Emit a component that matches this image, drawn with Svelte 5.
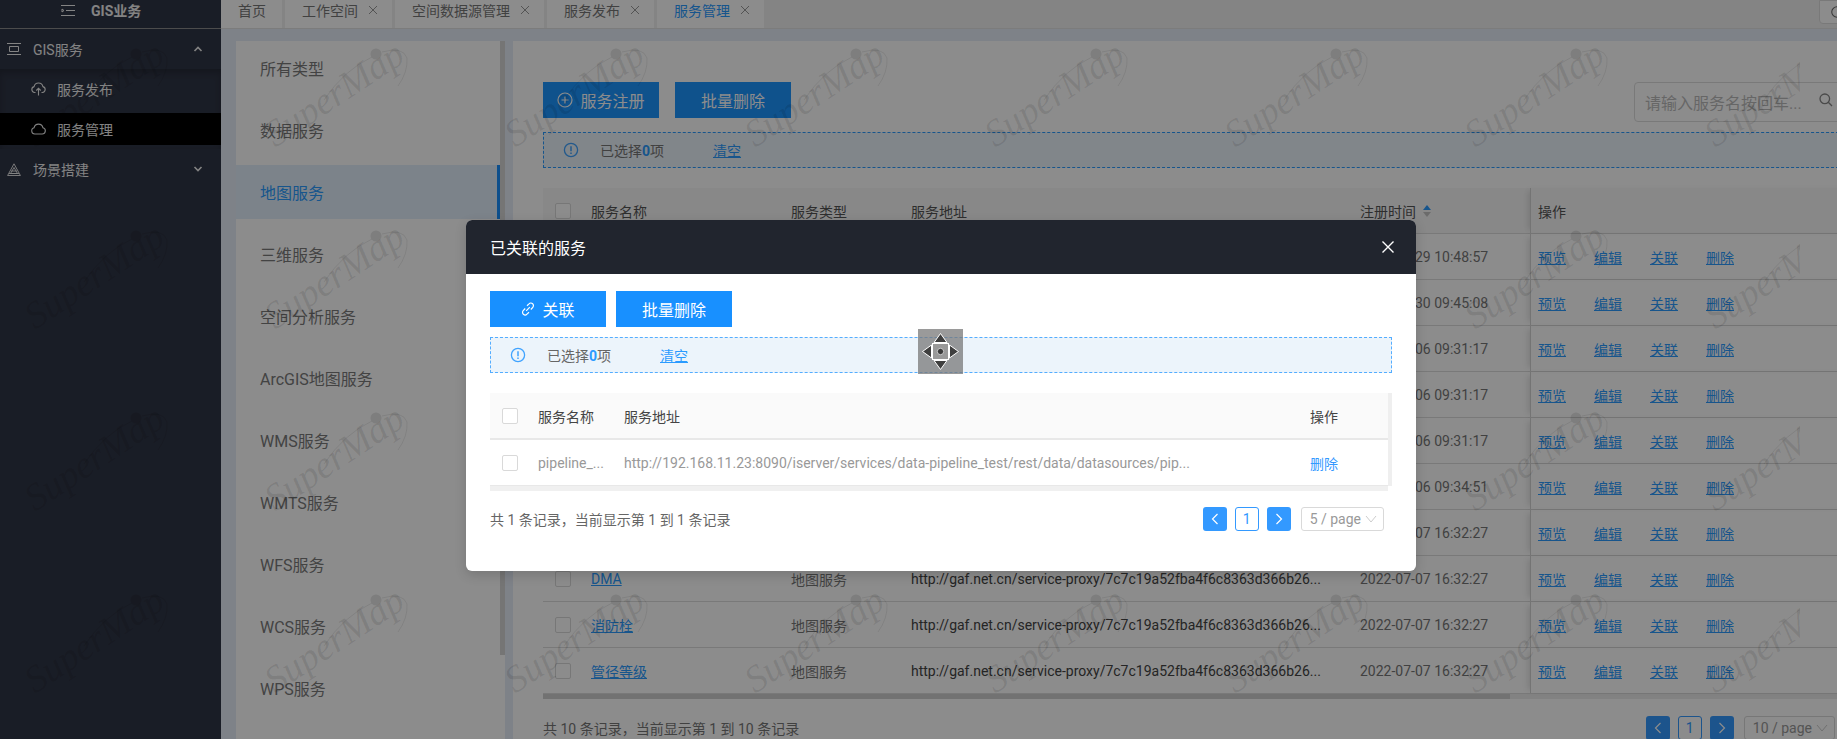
<script lang="ts">
  const tabs = [
    { label: '首页', close: false, active: false },
    { label: '工作空间', close: true, active: false },
    { label: '空间数据源管理', close: true, active: false },
    { label: '服务发布', close: true, active: false },
    { label: '服务管理', close: true, active: true },
  ];

  const types = [
    '所有类型', '数据服务', '地图服务', '三维服务', '空间分析服务', 'ArcGIS地图服务',
    'WMS服务', 'WMTS服务', 'WFS服务', 'WCS服务', 'WPS服务',
  ];

  const proxyUrl = 'http://gaf.net.cn/service-proxy/7c7c19a52fba4f6c8363d366b26...';

  // rows 1-7 sit behind the modal, only their time and actions show
  const rows = [
    { name: '', type: '', url: '', time: '2022-06-29 10:48:57' },
    { name: '', type: '', url: '', time: '2022-06-30 09:45:08' },
    { name: '', type: '', url: '', time: '2022-07-06 09:31:17' },
    { name: '', type: '', url: '', time: '2022-07-06 09:31:17' },
    { name: '', type: '', url: '', time: '2022-07-06 09:31:17' },
    { name: '', type: '', url: '', time: '2022-07-06 09:34:51' },
    { name: '', type: '', url: '', time: '2022-07-07 16:32:27' },
    { name: 'DMA', type: '地图服务', url: proxyUrl, time: '2022-07-07 16:32:27' },
    { name: '消防栓', type: '地图服务', url: proxyUrl, time: '2022-07-07 16:32:27' },
    { name: '管径等级', type: '地图服务', url: proxyUrl, time: '2022-07-07 16:32:27' },
  ];

  const actions = ['预览', '编辑', '关联', '删除'];
  const marks = Array.from({ length: 40 }, (_, i) => i);
</script>

{#snippet infoIcon()}
  <svg class="info-icon" width="16" height="16" viewBox="0 0 16 16" fill="none" stroke="currentColor">
    <circle cx="8" cy="8" r="6.6" stroke-width="1.3" />
    <path d="M8 4.3v4.9M8 10.6v1.3" stroke-width="1.5" />
  </svg>
{/snippet}

{#snippet pager(size)}
  <div class="pager">
    <button class="page-btn">
      <svg width="10" height="12" viewBox="0 0 10 12" fill="none" stroke="currentColor" stroke-width="1.2"><path d="M7.5 1 2.5 6l5 5" /></svg>
    </button>
    <button class="page-num">1</button>
    <button class="page-btn">
      <svg width="10" height="12" viewBox="0 0 10 12" fill="none" stroke="currentColor" stroke-width="1.2"><path d="M2.5 1l5 5-5 5" /></svg>
    </button>
    <div class="page-size">
      <span>{size} / page</span>
      <svg width="12" height="8" viewBox="0 0 12 8" fill="none" stroke="currentColor"><path d="M1 1l5 6 5-6" /></svg>
    </div>
  </div>
{/snippet}

<div class="app">
  <aside class="sidebar">
    <div class="brand">
      <svg width="14" height="11" viewBox="0 0 14 11" fill="none" stroke="currentColor">
        <path d="M0 .5h14M5 5.5h9M0 10.5h14M1 4v3l2-1.5z" />
      </svg>
      <span>GIS业务</span>
    </div>

    <div class="menu-row">
      <svg width="14" height="12" viewBox="0 0 14 12" fill="none" stroke="currentColor">
        <path d="M0 .5h14M0 11.5h14M2.5 3.5h9v5h-9z" />
      </svg>
      <span>GIS服务</span>
      <svg class="caret" width="10" height="6" viewBox="0 0 10 6" fill="none" stroke="currentColor" stroke-width="1.6"><path d="M1.5 5 5 1.5 8.5 5" /></svg>
    </div>
    <div class="submenu">
      <div class="sub-item">
        <svg width="15" height="14" viewBox="0 0 15 14" fill="none" stroke="currentColor" stroke-width="1.1">
          <path d="M4.5 10.5H3.6a3 3 0 0 1-.5-5.9 4.5 4.5 0 0 1 8.8 0 3 3 0 0 1-.5 5.9h-.9M7.5 13.500V6.500M5.300 8.500l2.200-2.200 2.200 2.200" />
        </svg>
        <span>服务发布</span>
      </div>
      <div class="sub-item selected">
        <svg width="15" height="12" viewBox="0 0 15 12" fill="none" stroke="currentColor" stroke-width="1.1">
          <path d="M3.800 11h7.400a3.200 3.200 0 0 0 .7-6.300 4.500 4.500 0 0 0-8.800 0A3.200 3.200 0 0 0 3.800 11z" />
        </svg>
        <span>服务管理</span>
      </div>
    </div>
    <div class="menu-row">
      <svg width="14" height="13" viewBox="0 0 14 13" fill="none" stroke="currentColor" stroke-width=".9">
        <path d="M7 .8 13.400 12.500H.6zM7 4.500 10.500 10.500H3.500zM2 10.500h10M4.200 8h5.600" />
      </svg>
      <span>场景搭建</span>
      <svg class="caret" width="10" height="6" viewBox="0 0 10 6" fill="none" stroke="currentColor" stroke-width="1.6"><path d="M1.500 1 5 4.500 8.500 1" /></svg>
    </div>
  </aside>

  <main class="main">
    <div class="tabs">
      {#each tabs as tab (tab.label)}
        <div class="tab" class:plain={!tab.close} class:active={tab.active}>
          <span>{tab.label}</span>
          {#if tab.close}
            <svg width="10" height="10" viewBox="0 0 10 10" fill="none" stroke="currentColor"><path d="M1 1l8 8M9 1l-8 8" /></svg>
          {/if}
        </div>
      {/each}
      <div class="tab-tool">
        <svg width="16" height="16" viewBox="0 0 16 16" fill="none" stroke="currentColor" stroke-width="1.2"><circle cx="8" cy="8" r="6" /></svg>
      </div>
    </div>

    <div class="workspace">
      <nav class="types">
        <div class="type-list">
          {#each types as type (type)}
            <div class="type-item" class:active={type === '地图服务'}>{type}</div>
          {/each}
        </div>
        <div class="type-scroll"></div>
      </nav>

      <section class="content">
        <div class="toolbar">
          <button class="btn">
            <svg width="16" height="16" viewBox="0 0 16 16" fill="none" stroke="currentColor" stroke-width="1.2">
              <circle cx="8" cy="8" r="7" /><path d="M8 4.500v7M4.500 8h7" />
            </svg>
            服务注册
          </button>
          <button class="btn">批量删除</button>
          <div class="search">
            <span>请输入服务名按回车...</span>
            <svg width="14" height="14" viewBox="0 0 14 14" fill="none" stroke="currentColor" stroke-width="1.3">
              <circle cx="5.800" cy="5.800" r="4.800" /><path d="M9.300 9.300 13 13" />
            </svg>
          </div>
        </div>

        <div class="selection">
          {@render infoIcon()}
          <span class="picked">已选择<b>0</b>项</span>
          <a class="clear" href="#clear">清空</a>
        </div>

        <div class="grid-head main-cols">
          <span class="cell-check"><i class="check"></i></span>
          <span>服务名称</span>
          <span>服务类型</span>
          <span>服务地址</span>
          <span class="time-head">
            注册时间
            <svg width="8" height="16" viewBox="0 0 8 16"><path d="M4 2 8 7H0z" fill="#2a9bff" /><path d="M4 14 8 9H0z" fill="#c4c4c4" /></svg>
          </span>
          <span class="ops">操作</span>
        </div>
        {#each rows as row, i (i)}
          <div class="grid-row main-cols">
            <span class="cell-check"><i class="check"></i></span>
            <span><a class="link" href="#name">{row.name}</a></span>
            <span class="muted">{row.type}</span>
            <span class="url">{row.url}</span>
            <span class="muted">{row.time}</span>
            <span class="ops links">
              {#each actions as action (action)}
                <a class="link" href="#action">{action}</a>
              {/each}
            </span>
          </div>
        {/each}
        <div class="hscroll"><div class="hscroll-thumb"></div></div>

        <div class="list-foot">
          <span>共 10 条记录，当前显示第 1 到 10 条记录</span>
          {@render pager(10)}
        </div>
      </section>
    </div>
  </main>

  <div class="watermark">
    {#each marks as mark (mark)}
      <svg class="mark" width="240" height="182" viewBox="0 0 240 182">
        <circle cx="136" cy="54" r="5.500" fill="rgba(0,0,0,0.1)" />
        <path d="M84 100Q104 70 132 57M142 52Q163 46 167 58Q168 72 158 86" fill="none" stroke="rgba(0,0,0,0.08)" />
        <text x="35" y="148" transform="rotate(-33.500 35 148)">SuperMap</text>
      </svg>
    {/each}
  </div>

  <div class="mask"></div>

  <div class="modal">
    <header class="modal-head">
      <span>已关联的服务</span>
      <svg width="14" height="14" viewBox="0 0 14 14" fill="none" stroke="#fff" stroke-width="1.4"><path d="M1.500 1.500l11 11M12.500 1.500l-11 11" /></svg>
    </header>
    <div class="modal-body">
      <div class="modal-actions">
        <button class="btn light">
          <svg width="14" height="14" viewBox="0 0 14 14" fill="none" stroke="currentColor" stroke-width="1.2">
            <path d="M6 3.800 8 1.900a2.500 2.500 0 0 1 3.800 3.400L9.800 7.500M8 10.200 6 12.100a2.500 2.500 0 0 1-3.800-3.400L4.200 6.500M5.200 8.800l3.600-3.600" />
          </svg>
          关联
        </button>
        <button class="btn light">批量删除</button>
      </div>

      <div class="selection light">
        {@render infoIcon()}
        <span class="picked">已选择<b>0</b>项</span>
        <a class="clear" href="#clear">清空</a>
      </div>

      <div class="linked">
        <div class="linked-table">
          <div class="grid-head modal-cols">
            <span class="cell-check"><i class="check"></i></span>
            <span>服务名称</span>
            <span>服务地址</span>
            <span>操作</span>
          </div>
          <div class="grid-row modal-cols">
            <span class="cell-check"><i class="check"></i></span>
            <span class="soft">pipeline_...</span>
            <span class="soft">http://192.168.11.23:8090/iserver/services/data-pipeline_test/rest/data/datasources/pip...</span>
            <a class="remove" href="#remove">删除</a>
          </div>
          <div class="linked-hscroll"></div>
        </div>
        <div class="linked-vscroll"></div>
      </div>

      <div class="list-foot modal-foot">
        <span>共 1 条记录，当前显示第 1 到 1 条记录</span>
        {@render pager(5)}
      </div>
    </div>
  </div>

  <!-- drag cursor left on top of the modal -->
  <svg class="move" width="45" height="45" viewBox="0 0 45 45">
    <rect width="45" height="45" fill="rgba(120,120,120,0.75)" />
    <path d="M22.500 4.500 29 13.500H16zM22.500 40.500 29 31.500H16zM4.500 22.500 13.500 16v13zM40.500 22.500 31.500 16v13z" fill="#3f3f3f" stroke="#fff" stroke-linejoin="round" />
    <rect x="14.500" y="14.500" width="16" height="16" fill="#999" stroke="#fff" />
    <circle cx="22.500" cy="22.500" r="3.200" fill="#3a3a3a" stroke="#ccc" />
  </svg>
</div>

<style>
  :global(body) {
    margin: 0;
    background: #fff;
  }

  .app {
    position: relative;
    display: flex;
    width: 1837px;
    height: 739px;
    overflow: hidden;
    font-family: Roboto, "Noto Sans CJK SC", sans-serif;
    font-size: 14px;
    color: #777;
  }

  .sidebar {
    flex: none;
    width: 221px;
    background: #2f3545;
    color: #eee;
  }

  .brand {
    display: flex;
    align-items: center;
    gap: 16px;
    height: 29px;
    box-sizing: border-box;
    padding: 0 0 8px 61px;
    border-bottom: 1px solid #8a8a8a;
    font-weight: 700;
  }

  .menu-row {
    display: flex;
    align-items: center;
    gap: 12px;
    height: 40px;
    padding-left: 7px;
  }

  .caret {
    margin-left: auto;
    margin-right: 18px;
  }

  .submenu {
    display: flex;
    flex-direction: column;
    gap: 8px;
    padding: 4px 0;
    box-shadow: inset 0 4px 6px rgba(0, 0, 0, 0.2);
  }

  .sub-item {
    display: flex;
    align-items: center;
    gap: 11px;
    height: 32px;
    padding-left: 31px;
  }

  .sub-item.selected {
    background: #000;
  }

  .main {
    flex: 1;
    min-width: 0;
    background: #e5edf8;
  }

  .tabs {
    display: flex;
    gap: 3px;
    height: 28px;
    background: #f1f1f1;
    border-bottom: 1px solid #e2e2e2;
  }

  .tab {
    display: flex;
    align-items: center;
    gap: 10px;
    box-sizing: border-box;
    height: 28px;
    padding: 0 14px 9px 17px;
    background: #fff;
    color: #777;
    white-space: nowrap;
  }

  .tab.plain {
    padding-right: 16px;
  }

  .tab svg {
    color: #999;
  }

  .tab.active {
    color: #2a9bff;
  }

  .tab-tool {
    display: flex;
    align-items: center;
    flex: none;
    box-sizing: border-box;
    width: 26px;
    height: 24px;
    margin-left: auto;
    margin-right: -8px;
    padding-left: 10px;
    background: #fff;
    border: 1px solid #ddd;
    border-radius: 0 0 0 4px;
    color: #666;
  }

  .workspace {
    display: flex;
    gap: 8px;
    padding: 12px 0 0 15px;
  }

  .types {
    display: flex;
    flex: none;
    width: 269px;
    height: 698px;
    background: #fff;
  }

  .type-list {
    display: flex;
    flex-direction: column;
    gap: 8px;
    flex: none;
    width: 264px;
  }

  .type-item {
    display: flex;
    align-items: center;
    flex: none;
    box-sizing: border-box;
    height: 54px;
    padding-left: 24px;
    font-size: 16px;
    color: #7a7a7a;
  }

  .type-item.active {
    background: #e2effc;
    border-right: 3px solid #1890ff;
    color: #2a9bff;
  }

  .type-scroll {
    flex: none;
    width: 5px;
    height: 614px;
    background: #d6d6d6;
  }

  .content {
    flex: none;
    box-sizing: border-box;
    width: 1341px;
    height: 698px;
    padding: 41px 0 0 30px;
    background: #fff;
  }

  .toolbar {
    display: flex;
    gap: 16px;
    height: 40px;
    margin-bottom: 10px;
  }

  .btn {
    display: flex;
    align-items: center;
    justify-content: center;
    gap: 7px;
    flex: none;
    width: 116px;
    height: 36px;
    padding: 0;
    background: #1c95ff;
    border: 0;
    color: #fff;
    font: inherit;
    font-size: 16px;
  }

  .search {
    display: flex;
    align-items: center;
    box-sizing: border-box;
    width: 220px;
    height: 40px;
    margin-left: auto;
    padding: 0 22px 0 10px;
    border: 1px solid #ddd;
    border-radius: 4px;
    font-size: 16px;
    color: #bbb;
    white-space: nowrap;
  }

  .search svg {
    margin-left: 17px;
    margin-top: -4px;
    flex: none;
    color: #888;
  }

  .selection {
    display: flex;
    align-items: center;
    box-sizing: border-box;
    height: 36px;
    padding-left: 19px;
    background: #ecf4fb;
    border: 1px dashed #2a9bff;
    margin-bottom: 20px;
    color: #777;
  }

  .selection.light {
    border-color: #54adff;
    color: #666;
  }

  .info-icon {
    flex: none;
    margin-right: 21px;
    color: #40a3ff;
  }

  .picked {
    width: 113px;
  }

  .picked b {
    color: #2a9bff;
  }

  .clear {
    color: #2a9bff;
  }

  .grid-head,
  .grid-row {
    display: grid;
    align-items: center;
  }

  .main-cols {
    grid-template-columns: 48px 200px 120px 449px 170px 324px;
  }

  .grid-head.main-cols {
    height: 46px;
    box-sizing: border-box;
    background: #f8f8f8;
    border-bottom: 1px solid #dcdcdc;
    color: #555;
  }

  .grid-row.main-cols {
    height: 46px;
    box-sizing: border-box;
    border-bottom: 1px solid #dcdcdc;
    white-space: nowrap;
  }

  .cell-check {
    display: flex;
    padding-left: 12px;
  }

  .check {
    display: block;
    box-sizing: border-box;
    width: 16px;
    height: 16px;
    background: #fff;
    border: 1px solid #d9d9d9;
    border-radius: 2px;
  }

  .link {
    color: #2a9bff;
  }

  .muted {
    color: #777;
  }

  .url {
    color: #444;
  }

  .time-head {
    display: flex;
    align-items: center;
    gap: 7px;
  }

  .ops {
    display: flex;
    align-items: center;
    align-self: stretch;
    padding-left: 7px;
    border-left: 1px solid #d4d4d4;
    box-shadow: -5px 0 6px -3px rgba(0, 0, 0, 0.12);
  }

  .links {
    gap: 28px;
  }

  .hscroll {
    height: 5px;
    background: #ededed;
  }

  .hscroll-thumb {
    width: 967px;
    height: 5px;
    background: #cfcfcf;
  }

  .list-foot {
    display: flex;
    align-items: center;
    justify-content: space-between;
    height: 24px;
    margin-top: 17px;
    padding-right: 19px;
    color: #777;
  }

  .pager {
    display: flex;
    align-items: center;
    gap: 8px;
  }

  .page-btn,
  .page-num {
    display: flex;
    align-items: center;
    justify-content: center;
    box-sizing: border-box;
    width: 24px;
    height: 24px;
    padding: 0;
    border-radius: 3px;
    font: inherit;
  }

  .page-btn {
    background: #3399ff;
    border: 0;
    color: #fff;
  }

  .page-num {
    background: #fff;
    border: 1px solid #3399ff;
    color: #3399ff;
  }

  .page-size {
    display: flex;
    align-items: center;
    justify-content: space-between;
    box-sizing: border-box;
    height: 24px;
    margin-left: 2px;
    padding: 0 6px 0 8px;
    gap: 4px;
    background: #fff;
    border: 1px solid #d9d9d9;
    border-radius: 3px;
    color: #999;
    white-space: nowrap;
  }

  .page-size svg {
    color: #ccc;
  }

  .watermark {
    position: absolute;
    top: 0;
    left: 0;
    display: grid;
    grid-template-columns: repeat(8, 240px);
    width: 1800px;
    height: 739px;
    overflow: hidden;
    pointer-events: none;
  }

  .mark {
    display: block;
    overflow: visible;
  }

  .mark text {
    font-family: "Liberation Serif", serif;
    font-size: 38px;
    font-style: italic;
    font-weight: 400;
    fill: rgba(0, 0, 0, 0.1);
  }

  .mask {
    position: absolute;
    inset: 0;
    background: rgba(0, 0, 0, 0.45);
  }

  .modal {
    position: absolute;
    top: 220px;
    left: 466px;
    width: 950px;
    height: 351px;
    overflow: hidden;
    background: #fff;
    border-radius: 6px;
    box-shadow: 0 4px 12px rgba(0, 0, 0, 0.15);
    color: #666;
  }

  .modal-head {
    display: flex;
    align-items: center;
    justify-content: space-between;
    height: 54px;
    padding: 0 21px 0 24px;
    background: #21252e;
    color: #fff;
    font-size: 16px;
  }

  .modal-body {
    padding: 17px 24px 0;
  }

  .modal-actions {
    display: flex;
    gap: 10px;
    margin-bottom: 10px;
  }

  .btn.light {
    background: #1890ff;
  }

  .linked {
    display: flex;
  }

  .linked-table {
    flex: 1;
    min-width: 0;
  }

  .linked-vscroll {
    flex: none;
    width: 4px;
    height: 93px;
    background: #efefef;
  }

  .modal-cols {
    grid-template-columns: 48px 86px 686px 78px;
  }

  .grid-head.modal-cols {
    height: 47px;
    box-sizing: border-box;
    background: #fafafa;
    border-bottom: 2px solid #e8e8e8;
    color: #444;
  }

  .grid-row.modal-cols {
    height: 46px;
    box-sizing: border-box;
    border-bottom: 1px solid #e8e8e8;
    white-space: nowrap;
  }

  .soft {
    color: #999;
  }

  .remove {
    color: #3399ff;
    text-decoration: none;
  }

  .linked-hscroll {
    height: 5px;
    background: #f0f0f0;
  }

  .modal-foot {
    margin-top: 16px;
    padding-right: 8px;
    color: #666;
  }

  .move {
    position: absolute;
    top: 329px;
    left: 918px;
  }
</style>
